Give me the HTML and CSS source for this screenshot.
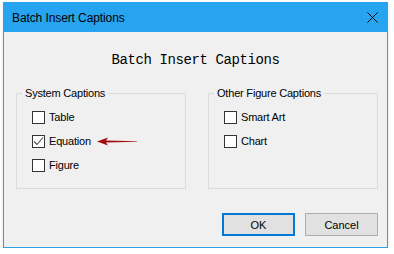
FILE: index.html
```html
<!DOCTYPE html>
<html lang="en">
<head>
  <meta charset="UTF-8" />
  <title>Batch Insert Captions</title>
  <link rel="stylesheet" href="styles.css">
</head>
<body>
  <div class="window">
    <div class="titlebar">
      <span class="title">Batch Insert Captions</span>
      <svg class="close" width="11" height="11" viewBox="0 0 11 11">
        <path d="M0.5 0.5 L10.5 10.5 M10.5 0.5 L0.5 10.5" stroke="#000" stroke-width="1" fill="none" />
      </svg>
    </div>

    <div class="content">
      <h1 class="heading">Batch Insert Captions</h1>

      <div class="groups">
        <fieldset class="group">
          <legend>System Captions</legend>
          <div class="group-body">
            <label class="check"><span class="box"></span>Table</label>
            <label class="check">
              <span class="box">
                <svg width="11" height="11" viewBox="0 0 11 11">
                  <path d="M1 5.5 L4 8.5 L10 1.5" stroke="#4a4a4a" stroke-width="1.1" fill="none" />
                </svg>
              </span>Equation
              <!-- red pointer arrow -->
              <svg class="arrow" width="40" height="9" viewBox="0 0 40 9">
                <path d="M0 4.5 L11 0.5 L9 3.6 L40 4.2 L40 4.8 L9 5.4 L11 8.5 Z" fill="#a50d0d" />
              </svg>
            </label>
            <label class="check"><span class="box"></span>Figure</label>
          </div>
        </fieldset>

        <fieldset class="group">
          <legend>Other Figure Captions</legend>
          <div class="group-body">
            <label class="check"><span class="box"></span>Smart Art</label>
            <label class="check"><span class="box"></span>Chart</label>
          </div>
        </fieldset>
      </div>

      <div class="buttons">
        <button class="btn btn-default">OK</button>
        <button class="btn">Cancel</button>
      </div>
    </div>
  </div>
</body>
</html>
```

FILE: styles.css
```css
body {
  margin: 0;
  background-color: #fff;
  font-family: "Liberation Sans", Arial, sans-serif;
  font-size: 11px;
  letter-spacing: -0.2px;
  color: #000;
}
.window {
  margin: 2px 0 0 3px;
  width: 385px;
  height: 246px;
  box-sizing: border-box;
  border: 1px solid #2b9fe8;
  border-top: none;
  background-color: #f0f0f0;
  box-shadow: 0 1px 4px rgba(0,0,0,0.12);
  display: flex;
  flex-direction: column;
}
.titlebar {
  height: 30px;
  margin: 0 -1px;
  padding: 0 10px 0 9px;
  background-color: #27a4f0;
  display: flex;
  align-items: center;
  justify-content: space-between;
}
.title {
  font-size: 12px;
  letter-spacing: -0.1px;
  margin-top: 2px;
}
.close {
  display: block;
  margin-top: 1px;
}
.content {
  flex: 1;
  display: flex;
  flex-direction: column;
}
.heading {
  margin: 20px 0 0;
  text-align: center;
  font-family: "Liberation Mono", "DejaVu Sans Mono", monospace;
  font-weight: normal;
  font-size: 14px;
  letter-spacing: -0.4px;
  line-height: 16px;
}
.groups {
  display: flex;
  gap: 22px;
  margin: 18px 0 0 12px;
}
.group {
  margin: 0;
  padding: 0;
  width: 170px;
  height: 103px;
  box-sizing: border-box;
  border: 1px solid #dcdcdc;
}
.group legend {
  margin-left: 5px;
  padding: 0 3px;
  line-height: 14px;
}
.group-body {
  display: flex;
  flex-direction: column;
  gap: 11px;
  padding: 11px 0 0 15px;
}
.check {
  display: flex;
  align-items: center;
  height: 13px;
  line-height: 13px;
}
.box {
  width: 13px;
  height: 13px;
  box-sizing: border-box;
  border: 1px solid #333;
  background-color: #fff;
  margin-right: 4px;
  display: flex;
  align-items: center;
  justify-content: center;
}
.box svg {
  display: block;
}
.arrow {
  margin-left: 6px;
  display: block;
}
.buttons {
  display: flex;
  justify-content: flex-end;
  gap: 10px;
  margin: 24px 9px 0 0;
}
.btn {
  width: 73px;
  height: 23px;
  box-sizing: border-box;
  background-color: #e1e1e1;
  border: 1px solid #adadad;
  font-family: "Liberation Sans", Arial, sans-serif;
  font-size: 11px;
  color: #000;
  padding: 0;
}
.btn-default {
  border: 2px solid #0078d7;
}
```
